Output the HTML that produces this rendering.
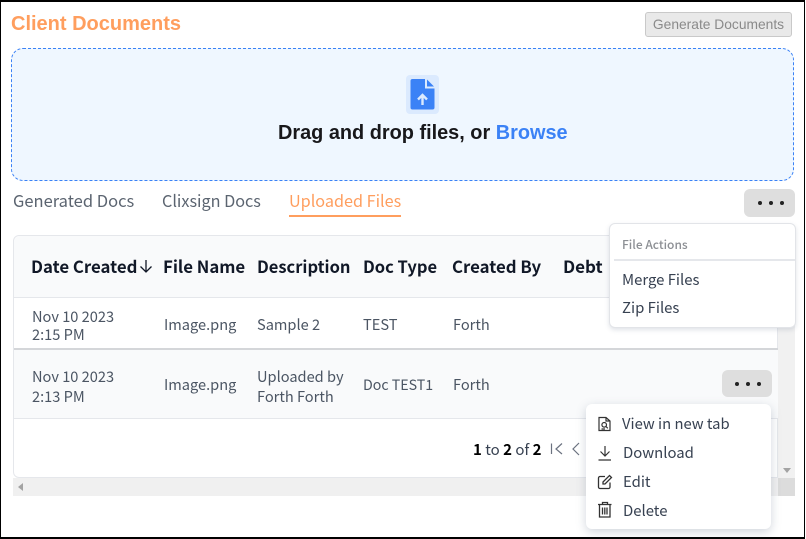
<!DOCTYPE html>
<html><head><meta charset="utf-8">
<style>
html,body{margin:0;padding:0;background:#fff}
#p{position:relative;width:806px;height:539px;overflow:hidden;background:#fff;font-family:"Noto Sans CJK JP","Liberation Sans",sans-serif;color:#4b5563}
#p div,#p span.a{position:absolute;white-space:nowrap}
.ar{font-family:"Liberation Sans",sans-serif}
.th{font-size:16.8px;font-weight:700;color:#111827;line-height:20px;top:256px}
.td{font-size:14.6px;line-height:20px;color:#4b5563}
.dots{background:#dedede;border-radius:6px}
.dots i{position:absolute;width:4px;height:4px;border-radius:50%;background:#222;top:50%;margin-top:-2px}
.m{font-size:14.9px;line-height:20px;color:#374151}
</style></head><body>
<div id="p">
<div style="left:0;top:0;width:805px;height:2px;background:#000"></div>
<div style="left:0;top:0;width:1px;height:539px;background:#000"></div>
<div style="left:804px;top:0;width:1px;height:538px;background:#000"></div>
<div style="left:0;top:537px;width:805px;height:2px;background:#000"></div>

<div class="ar" style="left:11px;top:12px;font-size:20px;font-weight:700;line-height:24px;color:#ff9e5e">Client Documents</div>
<div class="ar" style="left:645px;top:12px;width:147px;height:25px;box-sizing:border-box;border:1px solid #c9c9c9;border-radius:3px;background:#e9e9e9;color:#8a8a8a;font-size:13.8px;line-height:23px;text-align:center">Generate Documents</div>

<div style="left:11px;top:48px;width:783px;height:133px;box-sizing:border-box;border:1px dashed #3b82f6;border-radius:12px;background:#eff7ff"></div>
<div style="left:406px;top:75px;width:33px;height:39px;background:#dbeafe;border-radius:4px"></div>
<svg style="position:absolute;left:406px;top:75px" width="33" height="39" viewBox="0 0 33 39">
<path d="M6.500 4H19V13.500H28.500V32.500a2 2 0 0 1-2 2H6.500a2 2 0 0 1-2-2V6a2 2 0 0 1 2-2z" fill="#3b82f6"/>
<path d="M21 4.500L28 11.500H21z" fill="#3b82f6"/>
<path d="M16.500 30V20M12 24.500L16.500 20L21 24.500" fill="none" stroke="#dbeafe" stroke-width="2.400"/>
</svg>
<div class="ar" style="left:278px;top:121px;font-size:19.9px;font-weight:700;line-height:24px;color:#18181b">Drag and drop files, or <span style="color:#3b82f6">Browse</span></div>

<div style="left:13px;top:189px;font-size:16.5px;line-height:22px;color:#5b6470">Generated Docs</div>
<div style="left:162px;top:189px;font-size:16.2px;line-height:22px;color:#5b6470">Clixsign Docs</div>
<div style="left:289px;top:189px;font-size:16.2px;line-height:22px;color:#ff9e5e">Uploaded Files</div>
<div style="left:289px;top:215px;width:112px;height:2px;background:#ff9e5e"></div>

<div class="dots" style="left:744px;top:189px;width:51px;height:28px"><i style="left:14px"></i><i style="left:25px"></i><i style="left:36px"></i></div>

<div style="left:13px;top:235px;width:765px;height:243px;box-sizing:border-box;border:1px solid #e5e7eb;border-radius:6px 0 0 6px;background:#fff"></div>
<div style="left:14px;top:236px;width:764px;height:61px;background:#f9fafb;border-radius:6px 0 0 0"></div>
<div style="left:14px;top:297px;width:764px;height:1px;background:#e5e7eb"></div>
<div style="left:14px;top:348px;width:764px;height:2px;background:#d4d6d9"></div>
<div style="left:14px;top:350px;width:764px;height:68px;background:#f9fafb"></div>
<div style="left:14px;top:418px;width:764px;height:1px;background:#e5e7eb"></div>

<div class="th" style="left:31px">Date Created</div>
<svg style="position:absolute;left:138px;top:258px" width="16" height="16" viewBox="0 0 16 16"><path d="M8 2V14M2.500 8.500L8 14L13.500 8.500" fill="none" stroke="#111827" stroke-width="1.300"/></svg>
<div class="th" style="left:163px">File Name</div>
<div class="th" style="left:257px;font-size:16.5px">Description</div>
<div class="th" style="left:363px;font-size:16.5px">Doc Type</div>
<div class="th" style="left:452px">Created By</div>
<div class="th" style="left:563px;font-size:17px">Debt</div>

<div class="td" style="left:32px;top:308px;line-height:18px">Nov 10 2023<br>2:15 PM</div>
<div class="td" style="left:164px;top:315px">Image.png</div>
<div class="td" style="left:257px;top:315px">Sample 2</div>
<div class="td" style="left:363px;top:315px">TEST</div>
<div class="td" style="left:453px;top:315px">Forth</div>

<div class="td" style="left:32px;top:367px">Nov 10 2023<br>2:13 PM</div>
<div class="td" style="left:164px;top:375px">Image.png</div>
<div class="td" style="left:257px;top:367px">Uploaded by<br>Forth Forth</div>
<div class="td" style="left:363px;top:375px;font-size:14.2px">Doc TEST1</div>
<div class="td" style="left:453px;top:375px">Forth</div>

<div class="dots" style="left:722px;top:370px;width:50px;height:27px"><i style="left:13px"></i><i style="left:24px"></i><i style="left:35px"></i></div>

<div style="left:473px;top:440px;font-size:15px;line-height:20px;color:#374151"><b style="color:#000">1</b> to <b style="color:#000">2</b> of <b style="color:#000">2</b></div>
<svg style="position:absolute;left:548px;top:441px" width="36" height="16" viewBox="0 0 36 16"><path d="M3.500 2.500V13M14 2.500L8 8L14 13M31 2L25 8L31 14" fill="none" stroke="#6b7280" stroke-width="1.200"/></svg>

<div style="left:778px;top:235px;width:17px;height:243px;background:#f1f1f1"></div>
<div style="left:13px;top:478px;width:765px;height:18px;background:#f0f0f0"></div>
<div style="left:778px;top:478px;width:17px;height:18px;background:#dcdcdc"></div>
<svg style="position:absolute;left:18px;top:483px" width="6" height="8" viewBox="0 0 6 8"><path d="M5 0V8L0 4z" fill="#a3a3a3"/></svg>
<svg style="position:absolute;left:783px;top:468px" width="8" height="5" viewBox="0 0 8 5"><path d="M0 0H8L4 5z" fill="#a3a3a3"/></svg>

<div style="left:609px;top:223px;width:187px;height:105px;box-sizing:border-box;border:1px solid #e2e4e8;border-radius:6px;background:#fff;box-shadow:0 2px 5px rgba(100,116,139,.2)"></div>
<div style="left:622px;top:236px;font-size:12px;line-height:18px;color:#8c8f94;font-weight:500">File Actions</div>
<div style="left:614px;top:259px;width:181px;height:2px;background:#e5e7eb"></div>
<div class="m" style="left:622px;top:270px">Merge Files</div>
<div class="m" style="left:622px;top:298px">Zip Files</div>

<div style="left:586px;top:404px;width:185px;height:125px;border-radius:6px;background:#fff;box-shadow:0 3px 10px rgba(100,116,139,.3)"></div>
<svg style="position:absolute;left:596px;top:415px" width="18" height="18" viewBox="0 0 18 18" fill="none" stroke="#333" stroke-width="1.200"><path d="M3 2.500H10L14 6V15.500H3z"/><path d="M10 2.500V6H14"/><circle cx="8.200" cy="9.800" r="2.300"/><path d="M10 11.500L11.800 13.300M5.500 14H9"/></svg>
<div class="m" style="left:622px;top:414px;font-size:14.8px">View in new tab</div>
<svg style="position:absolute;left:596px;top:444px" width="18" height="18" viewBox="0 0 18 18" fill="none" stroke="#333" stroke-width="1.200"><path d="M9 2V12M4.500 7.500L9 12L13.500 7.500M2.500 16H15"/></svg>
<div class="m" style="left:623px;top:443px">Download</div>
<svg style="position:absolute;left:596px;top:473px" width="18" height="18" viewBox="0 0 18 18" fill="none" stroke="#333" stroke-width="1.300"><path d="M9 3.500H4a1.500 1.500 0 0 0-1.500 1.500V14A1.500 1.500 0 0 0 4 15.500H12.500A1.500 1.500 0 0 0 14 14V9.500"/><path d="M7 9L13.500 2.500L15.500 4.500L9 11H7z"/></svg>
<div class="m" style="left:623px;top:472px">Edit</div>
<svg style="position:absolute;left:596px;top:501px" width="18" height="18" viewBox="0 0 18 18" fill="none" stroke="#333" stroke-width="1.300"><path d="M2 3.500H15.500M6.500 3.500V1.500H11.500V3.500M3.500 3.500V16H14V3.500M6.500 6.500V13.500M8.800 6.500V13.500M11 6.500V13.500"/></svg>
<div class="m" style="left:623px;top:501px">Delete</div>
</div>
</body></html>
